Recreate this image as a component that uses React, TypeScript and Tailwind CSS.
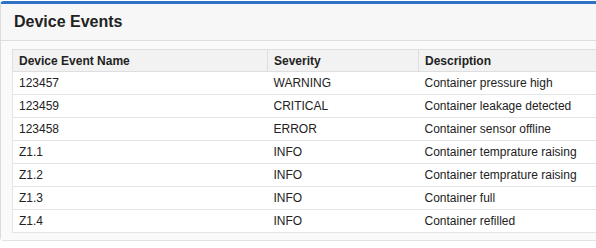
import React from 'react';

const events = [
  { name: '123457', severity: 'WARNING', description: 'Container pressure high' },
  { name: '123459', severity: 'CRITICAL', description: 'Container leakage detected' },
  { name: '123458', severity: 'ERROR', description: 'Container sensor offline' },
  { name: 'Z1.1', severity: 'INFO', description: 'Container temprature raising' },
  { name: 'Z1.2', severity: 'INFO', description: 'Container temprature raising' },
  { name: 'Z1.3', severity: 'INFO', description: 'Container full' },
  { name: 'Z1.4', severity: 'INFO', description: 'Container refilled' },
];

export default function App() {
  return (
    <div className="w-[596px] h-[248px] overflow-hidden bg-white font-['Liberation_Sans',Arial,sans-serif] text-[#222]">
      <div className="w-[640px] mt-px border-t-[3px] border-t-[#2f73c6] border-l border-l-[#dcdcdc] border-b border-b-[#e2e2e2] rounded-[4px] bg-[#f8f8f8]">
        <div className="h-[37px] flex items-center px-[13px] border-b border-b-[#dedede] bg-[#f7f7f7]">
          <h2 className="text-[16px] font-bold text-[#222] leading-none">Device Events</h2>
        </div>
        <div className="pl-[11px] pt-[8px] pb-[7px] bg-[#fafafa]">
          <table className="border-collapse text-[12px] bg-white w-[640px]">
            <thead>
              <tr className="bg-[#f2f2f2] h-[22px]">
                <th className="w-[255px] text-left font-bold px-[6px] border border-[#dedede]">Device Event Name</th>
                <th className="w-[151px] text-left font-bold px-[6px] border border-[#dedede]">Severity</th>
                <th className="text-left font-bold px-[6px] border border-[#dedede]">Description</th>
              </tr>
            </thead>
            <tbody>
              {events.map((e, i) => (
                <tr key={i} className="h-[23px]">
                  <td className="px-[6px] border-l border-b border-[#e4e4e4]">{e.name}</td>
                  <td className="px-[6px] border-b border-[#e4e4e4]">{e.severity}</td>
                  <td className="px-[6px] border-b border-[#e4e4e4]">{e.description}</td>
                </tr>
              ))}
            </tbody>
          </table>
        </div>
      </div>
    </div>
  );
}
